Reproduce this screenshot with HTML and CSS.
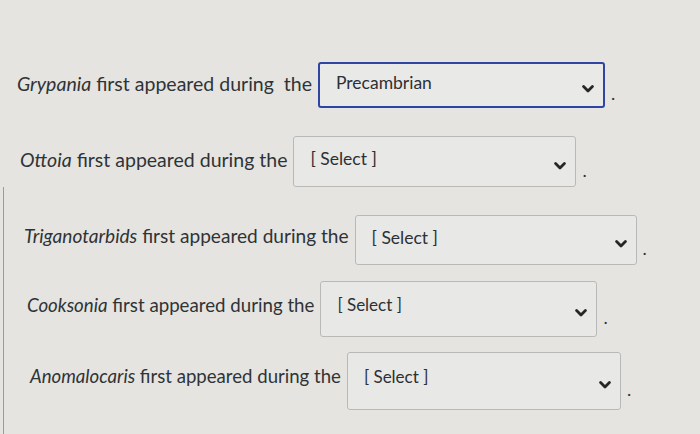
FILE: index.html
```html
<!DOCTYPE html>
<html>
<head>
<meta charset="utf-8">
<link rel="stylesheet" href="styles.css">
</head>
<body>
<div class="page">
  <div class="row r1">
    <span class="q"><i>Grypania</i> first appeared during&nbsp; the</span>
    <div class="select active w1"><span class="val">Precambrian</span><svg class="chev" viewBox="0 0 12 8"><path d="M1.6 1.6 L6 6 L10.4 1.6" fill="none" stroke="#262626" stroke-width="2.8" stroke-linecap="round" stroke-linejoin="round"/></svg></div>
    <span class="dot">.</span>
  </div>
  <div class="row r2">
    <span class="q"><i>Ottoia</i> first appeared during the</span>
    <div class="select w2"><span class="val">[ Select ]</span><svg class="chev" viewBox="0 0 12 8"><path d="M1.6 1.6 L6 6 L10.4 1.6" fill="none" stroke="#262626" stroke-width="2.8" stroke-linecap="round" stroke-linejoin="round"/></svg></div>
    <span class="dot">.</span>
  </div>
  <div class="lower">
    <div class="row r3">
      <span class="q"><i>Triganotarbids</i> first appeared during the</span>
      <div class="select w3"><span class="val">[ Select ]</span><svg class="chev" viewBox="0 0 12 8"><path d="M1.6 1.6 L6 6 L10.4 1.6" fill="none" stroke="#262626" stroke-width="2.8" stroke-linecap="round" stroke-linejoin="round"/></svg></div>
      <span class="dot">.</span>
    </div>
    <div class="row r4">
      <span class="q"><i>Cooksonia</i> first appeared during the</span>
      <div class="select w4"><span class="val">[ Select ]</span><svg class="chev" viewBox="0 0 12 8"><path d="M1.6 1.6 L6 6 L10.4 1.6" fill="none" stroke="#262626" stroke-width="2.8" stroke-linecap="round" stroke-linejoin="round"/></svg></div>
      <span class="dot">.</span>
    </div>
    <div class="row r5">
      <span class="q"><i>Anomalocaris</i> first appeared during the</span>
      <div class="select w5"><span class="val">[ Select ]</span><svg class="chev" viewBox="0 0 12 8"><path d="M1.6 1.6 L6 6 L10.4 1.6" fill="none" stroke="#262626" stroke-width="2.8" stroke-linecap="round" stroke-linejoin="round"/></svg></div>
      <span class="dot">.</span>
    </div>
  </div>
</div>
</body>
</html>
```

FILE: styles.css
```css
html, body {
  margin: 0;
  padding: 0;
}
body {
  width: 700px;
  height: 434px;
  overflow: hidden;
  background: #e5e4e1;
  font-family: Lato, "Open Sans", sans-serif;
  color: #2f3336;
}
.page {
  padding-top: 62px;
  display: flex;
  flex-direction: column;
}
.row {
  display: flex;
  align-items: center;
}
.q {
  font-size: 19.5px;
  white-space: nowrap;
  margin-right: 6px;
  position: relative;
  top: -2px;
}
.q i {
  font-style: italic;
}
.select {
  box-sizing: border-box;
  border: 1px solid #b9bab8;
  border-radius: 3px;
  background: #e8e8e6;
  display: flex;
  align-items: center;
  justify-content: space-between;
  padding: 0 9px 0 16px;
}
.select.active {
  border: 2.5px solid #2f44a3;
  background: #e9e9e8;
}
.val {
  font-size: 17.5px;
  color: #2c3034;
  position: relative;
  top: -3px;
}
.chev {
  width: 12px;
  height: 8px;
  position: relative;
  top: 4px;
}
.dot {
  font-size: 18px;
  margin-left: 6px;
  position: relative;
  top: 8px;
}
.w1 { width: 287px; height: 46px; }
.w2 { width: 283px; height: 51px; }
.w3 { width: 282px; height: 50px; }
.w4 { width: 277px; height: 56px; }
.w5 { width: 274px; height: 58px; }
.r1 { margin-left: 17px; }
.r2 { margin-left: 20px; margin-top: 28px; }
.lower {
  margin-left: 3px;
  border-left: 1.5px solid #9a9b9a;
  padding-top: 28px;
  padding-bottom: 40px;
  display: flex;
  flex-direction: column;
}
.r3 { margin-left: 20px; }
.r3 .q { font-size: 19.1px; top: -5px; }
.r4 { margin-left: 23px; margin-top: 16px; }
.r4 .q { font-size: 18.7px; top: -4px; }
.r4 .val { font-size: 17px; top: -5px; }
.r5 { margin-left: 26px; margin-top: 15px; }
.r5 .q { font-size: 18.6px; top: -5px; }
.r5 .val { font-size: 17px; top: -5px; }
```
